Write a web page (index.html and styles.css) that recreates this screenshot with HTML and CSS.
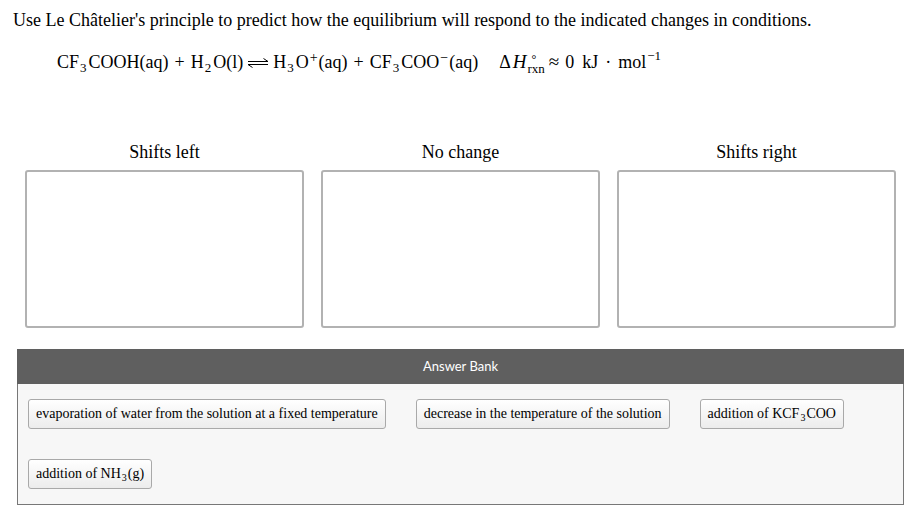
FILE: index.html
```html
<!DOCTYPE html>
<html>
<head>
<meta charset="utf-8">
<link rel="stylesheet" href="styles.css">
</head>
<body>
<div class="page">
  <p class="prompt">Use Le Châtelier's principle to predict how the equilibrium will respond to the indicated changes in conditions.</p>
  <div class="equation"><span>CF<sub>3</sub>COOH(aq)</span><span class="op">+</span><span>H<sub>2</sub>O(l)</span><svg class="arrow" width="22" height="10" viewBox="0 0 22 10"><path d="M1 3.5 H21 L16.5 0.5" fill="none" stroke="#000" stroke-width="1"/><path d="M21 6.5 H1 L5.5 9.5" fill="none" stroke="#000" stroke-width="1"/></svg><span>H<sub>3</sub>O<sup>+</sup>(aq)</span><span class="op">+</span><span>CF<sub>3</sub>COO<sup>−</sup>(aq)</span><span class="dh"><span class="delta">Δ</span><i>H</i><span class="scripts"><span class="deg">°</span><span class="rxn">rxn</span></span><span class="approx">≈</span>0<span class="sp"></span>kJ<span class="dot">·</span>mol<sup>−1</sup></span></div>
  <div class="bins">
    <div class="bin">
      <div class="bin-label">Shifts left</div>
      <div class="bin-box"></div>
    </div>
    <div class="bin">
      <div class="bin-label">No change</div>
      <div class="bin-box"></div>
    </div>
    <div class="bin">
      <div class="bin-label">Shifts right</div>
      <div class="bin-box"></div>
    </div>
  </div>
  <div class="bank">
    <div class="bank-header">Answer Bank</div>
    <div class="bank-body">
      <div class="chip">evaporation of water from the solution at a fixed temperature</div>
      <div class="chip">decrease in the temperature of the solution</div>
      <div class="chip">addition of KCF<sub>3</sub>COO</div>
      <div class="chip">addition of NH<sub>3</sub>(g)</div>
    </div>
  </div>
</div>
</body>
</html>
```

FILE: styles.css
```css
html, body {
  margin: 0;
  padding: 0;
  background: #fff;
}
.page {
  font-family: "Liberation Serif", "Times New Roman", serif;
  color: #000;
  width: 911px;
}
.prompt {
  margin: 0;
  padding: 10px 0 0 13px;
  font-size: 18px;
  line-height: 20px;
}
.equation {
  margin-top: 22px;
  padding-left: 57px;
  font-size: 18px;
  line-height: 20px;
  height: 20px;
  white-space: nowrap;
}
.equation sub {
  font-size: 13px;
  vertical-align: -4px;
  line-height: 0;
  margin: 0 2px 0 1px;
}
.equation sup {
  font-size: 14px;
  vertical-align: 6px;
  line-height: 0;
  margin: 0 1px;
}
.op {
  margin: 0 6px;
}
.arrow {
  margin: 0 4px 0 4px;
  vertical-align: 0px;
}
.dh {
  margin-left: 21px;
}
.delta {
  margin-right: 2px;
}
.dh i {
  font-style: italic;
  font-size: 19px;
}
.scripts {
  display: inline-block;
  vertical-align: -5px;
  font-size: 13px;
  line-height: 10px;
  margin-left: 1px;
}
.scripts .deg {
  display: block;
  padding-left: 4px;
  font-size: 12px;
}
.scripts .rxn {
  display: block;
}
.approx {
  font-size: 19px;
  margin: 0 6px 0 4px;
}
.sp {
  display: inline-block;
  width: 8px;
}
.dot {
  margin: 0 7px;
}
.dh sup {
  font-size: 13px;
  vertical-align: 8px;
  margin-left: 1px;
}
.bins {
  display: flex;
  gap: 17px;
  padding: 70px 0 0 25px;
}
.bin {
  width: 279px;
  display: flex;
  flex-direction: column;
  align-items: center;
}
.bin-label {
  font-size: 18px;
  line-height: 20px;
  height: 20px;
  margin-bottom: 8px;
}
.bin-box {
  box-sizing: border-box;
  width: 279px;
  height: 158px;
  border: 2px solid #b2b2b2;
  border-radius: 3px;
}
.bank {
  margin: 21px 0 0 17px;
  width: 887px;
  box-sizing: border-box;
}
.bank-header {
  background: #5f5f5f;
  color: #fff;
  font-family: Lato, "Open Sans", sans-serif;
  font-size: 13px;
  height: 35px;
  line-height: 35px;
  text-align: center;
}
.bank-body {
  background: #f7f7f7;
  border: 1px solid #777;
  border-top: none;
  padding: 15px 0 14px 10px;
  display: flex;
  flex-wrap: wrap;
  column-gap: 30px;
  row-gap: 30px;
  height: 121px;
  box-sizing: border-box;
  align-content: flex-start;
}
.chip {
  box-sizing: border-box;
  height: 30px;
  line-height: 28px;
  padding: 0 7px;
  font-size: 14px;
  border: 1px solid #a9a9a9;
  border-radius: 3px;
  background: linear-gradient(#ffffff, #ececec);
  white-space: nowrap;
}
.chip sub {
  font-size: 10px;
  vertical-align: -3px;
  line-height: 0;
  margin: 0 1px;
}
```
